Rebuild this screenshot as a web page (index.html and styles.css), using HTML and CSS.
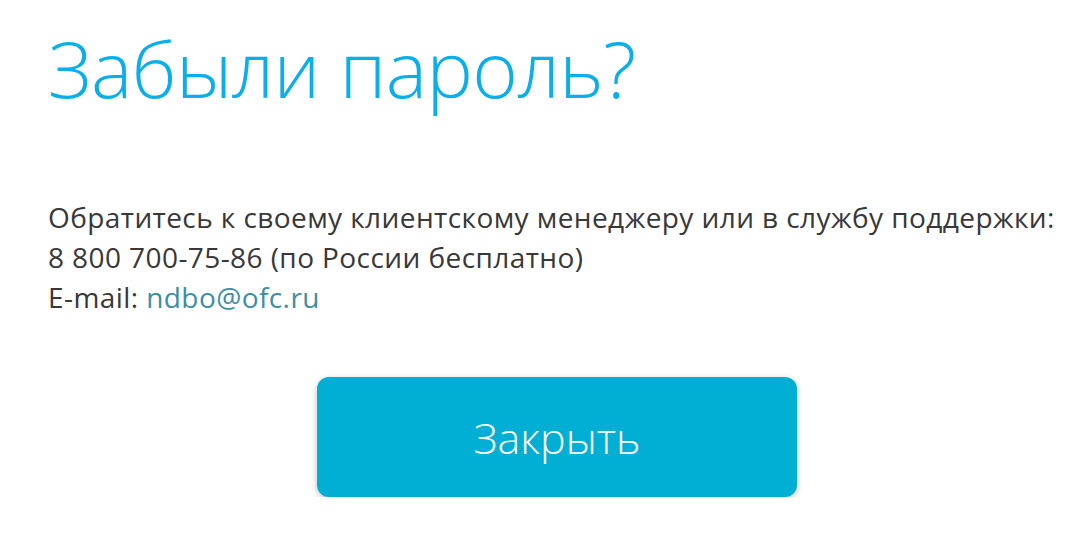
FILE: index.html
```html
<!DOCTYPE html>
<html lang="ru">
<head>
<meta charset="utf-8">
<link rel="stylesheet" href="styles.css">
</head>
<body>
<div class="dialog">
  <h1 class="title">Забыли пароль?</h1>
  <p class="text">Обратитесь к своему клиентскому менеджеру или в службу поддержки:<br>8 800 700-75-86 (по России бесплатно)<br>E-mail: <a class="link" href="#">ndbo@ofc.ru</a></p>
  <div class="actions"><button class="btn">Закрыть</button></div>
</div>
</body>
</html>
```
FILE: styles.css
```css
html, body { margin: 0; padding: 0; background: #fff; }
body { font-family: "Open Sans", "Noto Sans", sans-serif; }
.dialog { padding: 15px 22px 0 48px; }
.title {
  margin: 0;
  font-weight: 300;
  font-size: 78px;
  line-height: 106px;
  color: #09aeea;
  letter-spacing: -0.6px;
}
.text {
  margin: 76px 0 0 0;
  font-size: 28px;
  line-height: 40px;
  color: #383838;
  letter-spacing: 0.42px;
  white-space: nowrap;
}
.link { color: #3d8ea5; text-decoration: none; }
.actions { display: flex; justify-content: center; margin-top: 60px; }
.btn {
  width: 480px;
  height: 120px;
  border: none;
  border-radius: 12px;
  background: #02afd4;
  color: #fff;
  font-family: inherit;
  font-weight: 300;
  font-size: 43px;
  box-shadow: 0 2px 6px rgba(0,0,0,0.25);
}
```
